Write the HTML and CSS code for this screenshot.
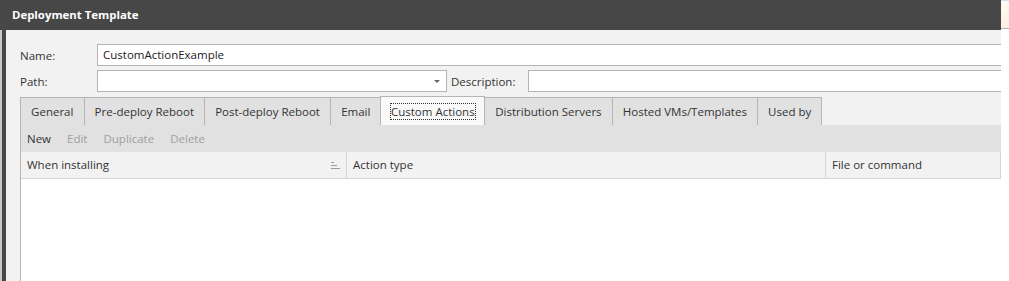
FILE: index.html
```html
<!DOCTYPE html>
<html>
<head>
<meta charset="utf-8">
<link rel="stylesheet" href="styles.css">
</head>
<body>
<div class="screen">
  <div class="top">
    <div class="titlebar">Deployment Template</div>
    <div class="side-top"></div>
  </div>
  <div class="mid">
    <div class="left-strip"></div>
    <div class="dialog">
      <div class="form-row">
        <label class="lbl">Name:</label>
        <div class="input wide">CustomActionExample</div>
      </div>
      <div class="form-row">
        <label class="lbl">Path:</label>
        <div class="input combo"><span class="arrow"></span></div>
        <label class="lbl desc">Description:</label>
        <div class="input wide"></div>
      </div>
      <div class="tabs">
        <div class="tab">General</div>
        <div class="tab">Pre-deploy Reboot</div>
        <div class="tab">Post-deploy Reboot</div>
        <div class="tab">Email</div>
        <div class="tab active"><span class="focus">Custom Actions</span></div>
        <div class="tab">Distribution Servers</div>
        <div class="tab">Hosted VMs/Templates</div>
        <div class="tab">Used by</div>
      </div>
      <div class="panel">
        <div class="toolbar">
          <span class="tb">New</span>
          <span class="tb off">Edit</span>
          <span class="tb off">Duplicate</span>
          <span class="tb off">Delete</span>
        </div>
        <div class="header">
          <div class="col c1">When installing
            <svg class="sort" width="9" height="7" viewBox="0 0 9 7"><rect x="0" y="0" width="3" height="1" fill="#9a9a9a"/><rect x="0" y="3" width="6" height="1" fill="#9a9a9a"/><rect x="0" y="6" width="9" height="1" fill="#9a9a9a"/></svg>
          </div>
          <div class="col c2">Action type</div>
          <div class="col c3">File or command</div>
        </div>
        <div class="grid-body"></div>
      </div>
    </div>
    <div class="side"></div>
  </div>
</div>
</body>
</html>
```
FILE: styles.css
```css
html, body {
  margin: 0;
  padding: 0;
  background: #ffffff;
}
body {
  font-family: "Open Sans", "Noto Sans", "Liberation Sans", sans-serif;
  font-size: 11.5px;
  color: #333333;
  width: 1009px;
  height: 281px;
  overflow: hidden;
}
.screen {
  display: flex;
  flex-direction: column;
  height: 281px;
}
.top {
  display: flex;
  height: 30px;
}
.titlebar {
  width: 989px;
  background: #474747;
  color: #ffffff;
  font-weight: bold;
  font-size: 11.4px;
  line-height: 30px;
  padding-left: 12px;
}
.side-top {
  width: 8px;
  height: 29px;
  border-top: 1px solid #cfdff0;
  background: linear-gradient(#fffaf3, #fdf0e0);
  border-bottom: 1px solid #b0b0b0;
  box-sizing: border-box;
}
.mid {
  display: flex;
  flex: 1;
  min-height: 0;
}
.left-strip {
  width: 4px;
  background: #474747;
  border-left: 2px solid #c8c8c8;
}
.dialog {
  width: 995px;
  background: #f2f2f2;
  overflow: hidden;
  padding: 14px 0 0 14px;
  box-sizing: border-box;
  display: flex;
  flex-direction: column;
}
.side {
  width: 8px;
  background: #ffffff;
}
.form-row {
  display: flex;
  align-items: center;
  height: 22px;
  margin-bottom: 4px;
}
.lbl {
  width: 77px;
  flex: none;
  color: #333333;
}
.lbl.desc {
  margin-left: 4px;
}
.input {
  height: 22px;
  box-sizing: border-box;
  border: 1px solid #b4b4b4;
  background: #ffffff;
  line-height: 20px;
  padding-left: 5px;
  color: #222222;
}
.input.wide {
  flex: 1;
  margin-right: -3px;
}
.combo {
  width: 350px;
  flex: none;
  position: relative;
}
.arrow {
  position: absolute;
  right: 6px;
  top: 9px;
  width: 0;
  height: 0;
  border-left: 3px solid transparent;
  border-right: 3px solid transparent;
  border-top: 3px solid #666666;
}
.tabs {
  display: flex;
  align-items: flex-end;
  height: 29px;
}
.tab {
  height: 28px;
  box-sizing: border-box;
  background: #e1e1e1;
  border: 1px solid #b4b4b4;
  border-bottom: none;
  margin-right: -1px;
  padding: 0 10.1px;
  line-height: 27px;
  color: #333333;
  white-space: nowrap;
}
.tab.active {
  height: 29px;
  background: #f9f9f9;
  padding: 0 9.5px;
  line-height: 29px;
}
.focus {
  outline: 1px dotted #333333;
}
.panel {
  flex: 1;
  display: flex;
  flex-direction: column;
  border-left: 1px solid #b4b4b4;
  background: #ffffff;
}
.toolbar {
  height: 27px;
  background: #e1e1e1;
  display: flex;
  align-items: center;
  padding-left: 6px;
  gap: 16px;
}
.tb.off {
  color: #a0a0a0;
}
.header {
  display: flex;
  height: 27px;
  background: #f2f2f2;
  border-bottom: 1px solid #d5d5d5;
  box-sizing: border-box;
}
.col {
  line-height: 26px;
  padding-left: 6px;
  box-sizing: border-box;
  border-right: 1px solid #d5d5d5;
  color: #333333;
}
.c1 {
  width: 326px;
  position: relative;
}
.sort {
  position: absolute;
  right: 6px;
  top: 10px;
}
.c2 {
  width: 479px;
}
.c3 {
  width: 175px;
}
.grid-body {
  flex: 1;
  background: #ffffff;
}
```
